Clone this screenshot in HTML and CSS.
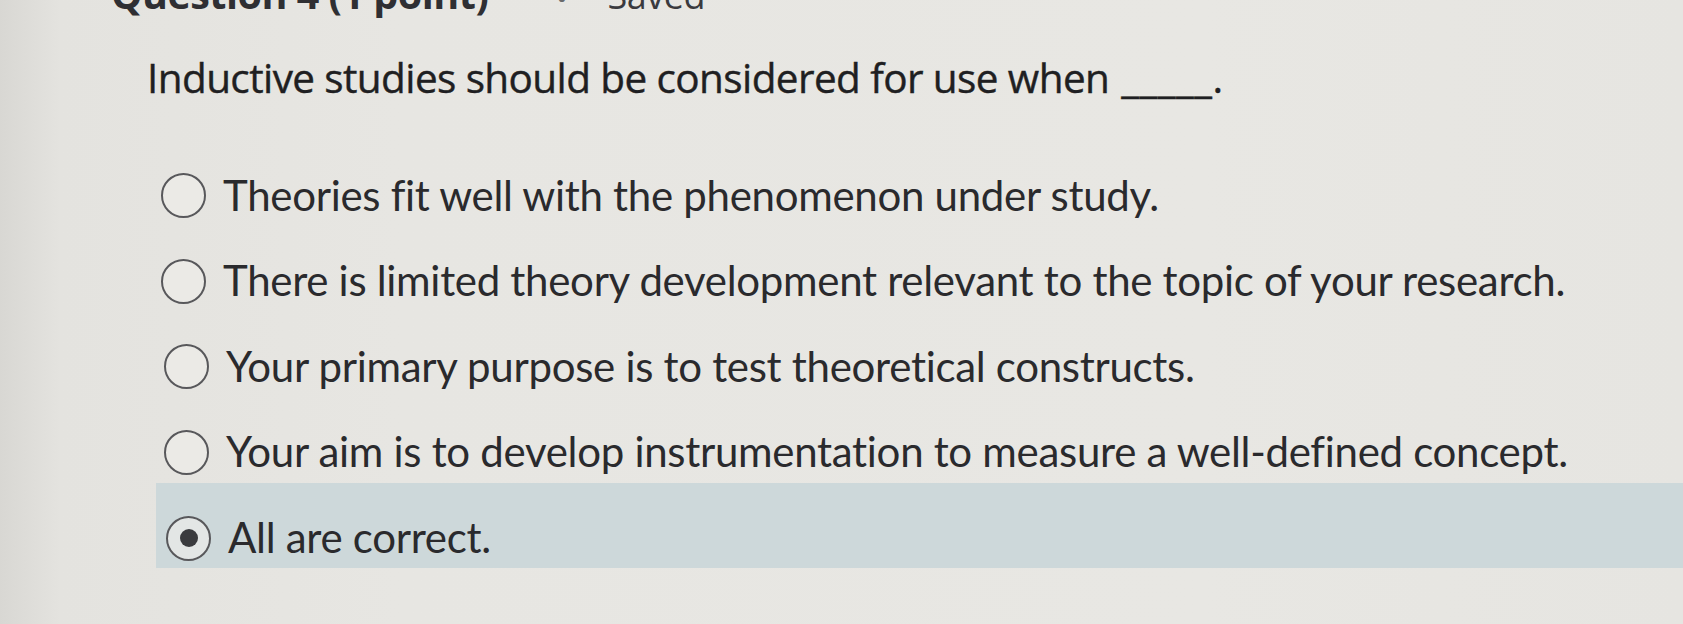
FILE: index.html
```html
<!DOCTYPE html>
<html>
<head>
<meta charset="utf-8">
<link rel="stylesheet" href="styles.css">
</head>
<body>
<div class="page">
  <div class="header">
    <span class="qtitle">Question 4 (1 point)</span>
    <span class="bullet">•</span>
    <span class="saved">Saved</span>
  </div>
  <div class="question">Inductive studies should be considered for use when <span class="blank">_____</span>.</div>
  <div class="options">
    <div class="option"><span class="radio"></span><span class="label">Theories fit well with the phenomenon under study.</span></div>
    <div class="option"><span class="radio"></span><span class="label">There is limited theory development relevant to the topic of your research.</span></div>
    <div class="option"><span class="radio"></span><span class="label">Your primary purpose is to test theoretical constructs.</span></div>
    <div class="option"><span class="radio"></span><span class="label">Your aim is to develop instrumentation to measure a well-defined concept.</span></div>
    <div class="option selected"><span class="radio"><span class="dot"></span></span><span class="label">All are correct.</span></div>
  </div>
</div>
</body>
</html>
```

FILE: styles.css
```css
html, body {
  margin: 0;
  padding: 0;
}
body {
  width: 1683px;
  height: 624px;
  overflow: hidden;
  background: linear-gradient(90deg, #d8d7d3 0px, #e4e3df 60px, #e7e6e2 400px, #e8e7e3 1200px, #e6e5e1 1683px);
  font-family: Lato, "Open Sans", sans-serif;
  color: #2a2a2d;
}
.page {
  padding-left: 147px;
}
.header {
  margin-top: -28px;
  height: 44px;
  display: flex;
  align-items: baseline;
  font-family: "Open Sans", sans-serif;
  font-size: 39.5px;
  line-height: 44px;
  margin-left: -36px;
}
.qtitle {
  font-weight: 700;
  color: #2f2f33;
  letter-spacing: -0.5px;
}
.bullet {
  margin-left: 68px;
  color: #6a6a6d;
  font-size: 30px;
}
.saved {
  margin-left: 40px;
  color: #3a3a3e;
  font-size: 36px;
  letter-spacing: -0.5px;
}
.question {
  margin-top: 34px;
  font-family: "Open Sans", sans-serif;
  font-weight: 400;
  font-size: 40.5px;
  line-height: 56px;
  letter-spacing: -0.6px;
  color: #1f1f22;
  -webkit-text-stroke: 0.4px #1f1f22;
}
.blank {
  letter-spacing: 0.5px;
  margin-left: 2px;
}
.options {
  margin-top: 47px;
  margin-left: 9px;
  display: flex;
  flex-direction: column;
}
.option {
  height: 85.5px;
  display: flex;
  align-items: center;
  gap: 17px;
  padding-left: 5px;
  font-size: 42px;
  letter-spacing: -0.3px;
  box-sizing: border-box;
}
.option:nth-child(3), .option:nth-child(4) {
  padding-left: 8px;
}
.option.selected {
  background: #cdd8da;
  padding-left: 10px;
  padding-top: 25px;
  margin-top: -12px;
  height: 85px;
}
.radio {
  width: 41px;
  height: 41px;
  border: 2.5px solid #58585b;
  border-radius: 50%;
  background: #ebeae6;
  display: flex;
  align-items: center;
  justify-content: center;
  flex: none;
}
.selected .radio {
  background: #e3e6e5;
}
.dot {
  width: 18px;
  height: 18px;
  border-radius: 50%;
  background: #3a3b3e;
}
.label {
  white-space: nowrap;
  position: relative;
  top: -1px;
}
```
